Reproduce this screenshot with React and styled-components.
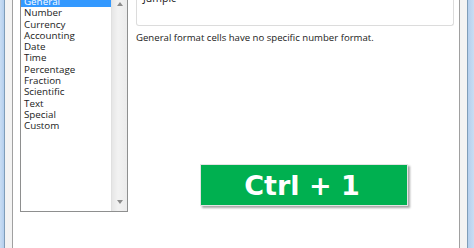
import React from "react";
import styled, { createGlobalStyle } from "styled-components";

const Global = createGlobalStyle`
  html, body {
    margin: 0;
    padding: 0;
    background: #ffffff;
  }
`;

const Page = styled.div`
  display: flex;
  width: 474px;
  height: 248px;
  overflow: hidden;
  font-family: "Open Sans", "Noto Sans", sans-serif;
`;

const FrameEdge = styled.div`
  width: ${(p) => p.width}px;
  flex-shrink: 0;
  background: linear-gradient(to ${(p) => (p.side === "left" ? "right" : "left")}, #c9ddf3, #b4cfee);
  border-${(p) => (p.side === "left" ? "right" : "left")}: 1px solid #7f9db9;
`;

const Gutter = styled.div`
  width: ${(p) => p.width}px;
  flex-shrink: 0;
  background: #f3f3f3;
  border-${(p) => (p.side === "left" ? "right" : "left")}: 1px solid #a0a0a0;
`;

const Panel = styled.div`
  flex: 1;
  display: flex;
  gap: 8px;
  padding: 0 5px 0 7px;
  background: #ffffff;
`;

const ListBox = styled.div`
  display: flex;
  width: 108px;
  height: 217px;
  margin-top: -5px;
  box-sizing: border-box;
  border: 1px solid #8e8f8f;
  background: #ffffff;
`;

const Items = styled.ul`
  flex: 1;
  margin: 0;
  padding: 0;
  list-style: none;
`;

const Item = styled.li`
  height: 11.3px;
  line-height: 11.3px;
  padding-left: 3px;
  font-size: 9.8px;
  color: ${(p) => (p.selected ? "#ffffff" : "#1a1a1a")};
  background: ${(p) => (p.selected ? "#3399ff" : "transparent")};
  white-space: nowrap;
  overflow: hidden;
`;

const Scrollbar = styled.div`
  width: 16px;
  display: flex;
  flex-direction: column;
  justify-content: space-between;
  align-items: center;
  padding: 6px 0 7px;
  box-sizing: border-box;
  background: linear-gradient(to right, #e6e6e6, #f2f2f2 40%, #ebebeb);
  border-left: 1px solid #e0e0e0;
`;

const Arrow = styled.span`
  width: 0;
  height: 0;
  border-left: 3.5px solid transparent;
  border-right: 3.5px solid transparent;
  ${(p) =>
    p.dir === "up"
      ? "border-bottom: 4px solid #8c8c8c;"
      : "border-top: 4px solid #8c8c8c;"}
`;

const RightColumn = styled.div`
  flex: 1;
  display: flex;
  flex-direction: column;
`;

const SampleBox = styled.div`
  height: 38px;
  margin-top: -12px;
  box-sizing: border-box;
  border: 1px solid #dcdcdc;
  border-top: none;
  border-radius: 0 0 3px 3px;
  padding-left: 6px;
  overflow: hidden;
`;

const SampleText = styled.div`
  font-size: 10.5px;
  line-height: 14px;
  margin-top: 3px;
  color: #1a1a1a;
`;

const Description = styled.p`
  margin: 5px 0 0;
  font-size: 9.6px;
  line-height: 13px;
  color: #1a1a1a;
  white-space: nowrap;
`;

const Shortcut = styled.div`
  align-self: flex-start;
  margin: 120px 0 0 64px;
  width: 208px;
  height: 42px;
  box-sizing: border-box;
  display: flex;
  align-items: center;
  justify-content: center;
  background: #00b050;
  border: 1px solid #e4e4e4;
  box-shadow: 2px 2px 2px rgba(0, 0, 0, 0.35);
  color: #ffffff;
  font-family: "DejaVu Sans", Verdana, sans-serif;
  font-weight: bold;
  font-size: 27px;
  padding-right: 4px;
`;

const formats = [
  "General",
  "Number",
  "Currency",
  "Accounting",
  "Date",
  "Time",
  "Percentage",
  "Fraction",
  "Scientific",
  "Text",
  "Special",
  "Custom",
];

export default function App() {
  return (
    <>
      <Global />
      <Page>
        <FrameEdge side="left" width={4} />
        <Gutter side="left" width={7} />
        <Panel>
          <ListBox>
            <Items>
              {formats.map((f, i) => (
                <Item key={f} selected={i === 0}>
                  {f}
                </Item>
              ))}
            </Items>
            <Scrollbar>
              <Arrow dir="up" />
              <Arrow dir="down" />
            </Scrollbar>
          </ListBox>
          <RightColumn>
            <SampleBox>
              <SampleText>Jumpic</SampleText>
            </SampleBox>
            <Description>General format cells have no specific number format.</Description>
            <Shortcut>Ctrl + 1</Shortcut>
          </RightColumn>
        </Panel>
        <Gutter side="right" width={7} />
        <FrameEdge side="right" width={6} />
      </Page>
    </>
  );
}
